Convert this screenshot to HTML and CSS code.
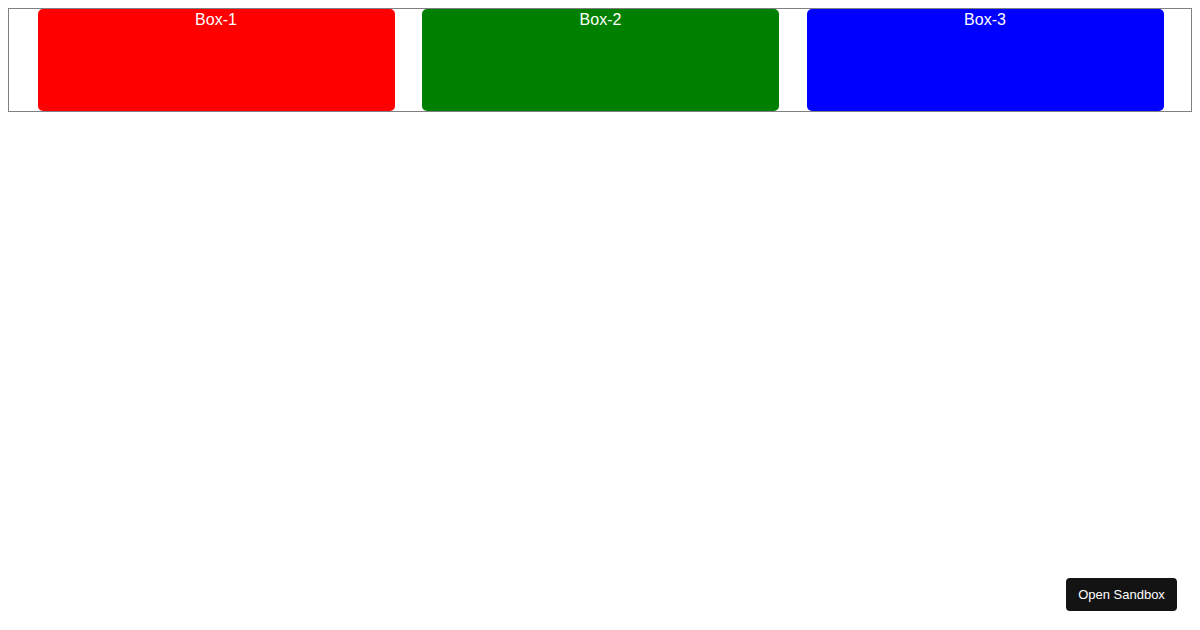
FILE: index.html
```html
<!DOCTYPE html>
<html>
<head>
<meta charset="utf-8">
<link rel="stylesheet" href="styles.css">
</head>
<body>
<div class="container">
  <div class="box box-red">Box-1</div>
  <div class="box box-green">Box-2</div>
  <div class="box box-blue">Box-3</div>
</div>
<button class="sandbox-btn">Open Sandbox</button>
</body>
</html>
```
FILE: styles.css
```css
body {
  margin: 8px;
  font-family: "Liberation Sans", Arial, sans-serif;
  background: #fff;
}
.container {
  display: flex;
  justify-content: space-evenly;
  padding-left: 1px;
  border: 1px solid #808080;
}
.box {
  width: 357px;
  height: 102px;
  border-radius: 5px;
  color: #fff;
  text-align: center;
  font-size: 16px;
  line-height: 21px;
}
.box-red { background: #ff0000; }
.box-green { background: #008000; }
.box-blue { background: #0000ff; }
.sandbox-btn {
  position: fixed;
  right: 23px;
  bottom: 19px;
  width: 111px;
  height: 33px;
  background: #131313;
  color: #fff;
  border: none;
  border-radius: 4px;
  font-family: "Liberation Sans", Arial, sans-serif;
  font-size: 13px;
  padding: 0;
}
```
